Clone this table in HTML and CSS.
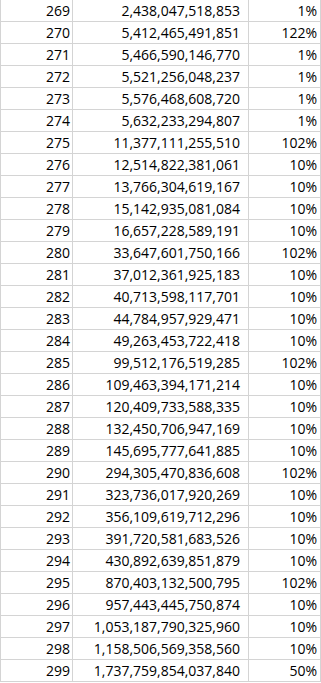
FILE: index.html
```html
<!DOCTYPE html>
<html>
<head>
<meta charset="utf-8">
<link rel="stylesheet" href="styles.css">
</head>
<body>
<div class="sheet">
<div class="row"><div class="c n">269</div><div class="c v">2,438,047,518,853</div><div class="c p">1%</div></div>
<div class="row"><div class="c n">270</div><div class="c v">5,412,465,491,851</div><div class="c p">122%</div></div>
<div class="row"><div class="c n">271</div><div class="c v">5,466,590,146,770</div><div class="c p">1%</div></div>
<div class="row"><div class="c n">272</div><div class="c v">5,521,256,048,237</div><div class="c p">1%</div></div>
<div class="row"><div class="c n">273</div><div class="c v">5,576,468,608,720</div><div class="c p">1%</div></div>
<div class="row"><div class="c n">274</div><div class="c v">5,632,233,294,807</div><div class="c p">1%</div></div>
<div class="row"><div class="c n">275</div><div class="c v">11,377,111,255,510</div><div class="c p">102%</div></div>
<div class="row"><div class="c n">276</div><div class="c v">12,514,822,381,061</div><div class="c p">10%</div></div>
<div class="row"><div class="c n">277</div><div class="c v">13,766,304,619,167</div><div class="c p">10%</div></div>
<div class="row"><div class="c n">278</div><div class="c v">15,142,935,081,084</div><div class="c p">10%</div></div>
<div class="row"><div class="c n">279</div><div class="c v">16,657,228,589,191</div><div class="c p">10%</div></div>
<div class="row"><div class="c n">280</div><div class="c v">33,647,601,750,166</div><div class="c p">102%</div></div>
<div class="row"><div class="c n">281</div><div class="c v">37,012,361,925,183</div><div class="c p">10%</div></div>
<div class="row"><div class="c n">282</div><div class="c v">40,713,598,117,701</div><div class="c p">10%</div></div>
<div class="row"><div class="c n">283</div><div class="c v">44,784,957,929,471</div><div class="c p">10%</div></div>
<div class="row"><div class="c n">284</div><div class="c v">49,263,453,722,418</div><div class="c p">10%</div></div>
<div class="row"><div class="c n">285</div><div class="c v">99,512,176,519,285</div><div class="c p">102%</div></div>
<div class="row"><div class="c n">286</div><div class="c v">109,463,394,171,214</div><div class="c p">10%</div></div>
<div class="row"><div class="c n">287</div><div class="c v">120,409,733,588,335</div><div class="c p">10%</div></div>
<div class="row"><div class="c n">288</div><div class="c v">132,450,706,947,169</div><div class="c p">10%</div></div>
<div class="row"><div class="c n">289</div><div class="c v">145,695,777,641,885</div><div class="c p">10%</div></div>
<div class="row"><div class="c n">290</div><div class="c v">294,305,470,836,608</div><div class="c p">102%</div></div>
<div class="row"><div class="c n">291</div><div class="c v">323,736,017,920,269</div><div class="c p">10%</div></div>
<div class="row"><div class="c n">292</div><div class="c v">356,109,619,712,296</div><div class="c p">10%</div></div>
<div class="row"><div class="c n">293</div><div class="c v">391,720,581,683,526</div><div class="c p">10%</div></div>
<div class="row"><div class="c n">294</div><div class="c v">430,892,639,851,879</div><div class="c p">10%</div></div>
<div class="row"><div class="c n">295</div><div class="c v">870,403,132,500,795</div><div class="c p">102%</div></div>
<div class="row"><div class="c n">296</div><div class="c v">957,443,445,750,874</div><div class="c p">10%</div></div>
<div class="row"><div class="c n">297</div><div class="c v">1,053,187,790,325,960</div><div class="c p">10%</div></div>
<div class="row"><div class="c n">298</div><div class="c v">1,158,506,569,358,560</div><div class="c p">10%</div></div>
<div class="row"><div class="c n">299</div><div class="c v">1,737,759,854,037,840</div><div class="c p">50%</div></div>
</div>
</body>
</html>
```
FILE: styles.css
```css
html, body {
  margin: 0;
  padding: 0;
  background: #ffffff;
}
.sheet {
  display: flex;
  flex-direction: column;
  width: 321px;
  font-family: "Open Sans", "Noto Sans", sans-serif;
  font-size: 14px;
  color: #000000;
}
.row {
  display: flex;
  height: 22px;
  box-sizing: border-box;
  border-left: 1px solid #d4d4d4;
  border-bottom: 1px solid #d4d4d4;
}
.c {
  box-sizing: border-box;
  height: 21px;
  line-height: 21px;
  text-align: right;
  border-right: 1px solid #d4d4d4;
  white-space: nowrap;
}
.n { width: 72px; padding-right: 2px; }
.v { width: 176px; padding-right: 8px; }
.p { width: 72px; padding-right: 3px; }
```
